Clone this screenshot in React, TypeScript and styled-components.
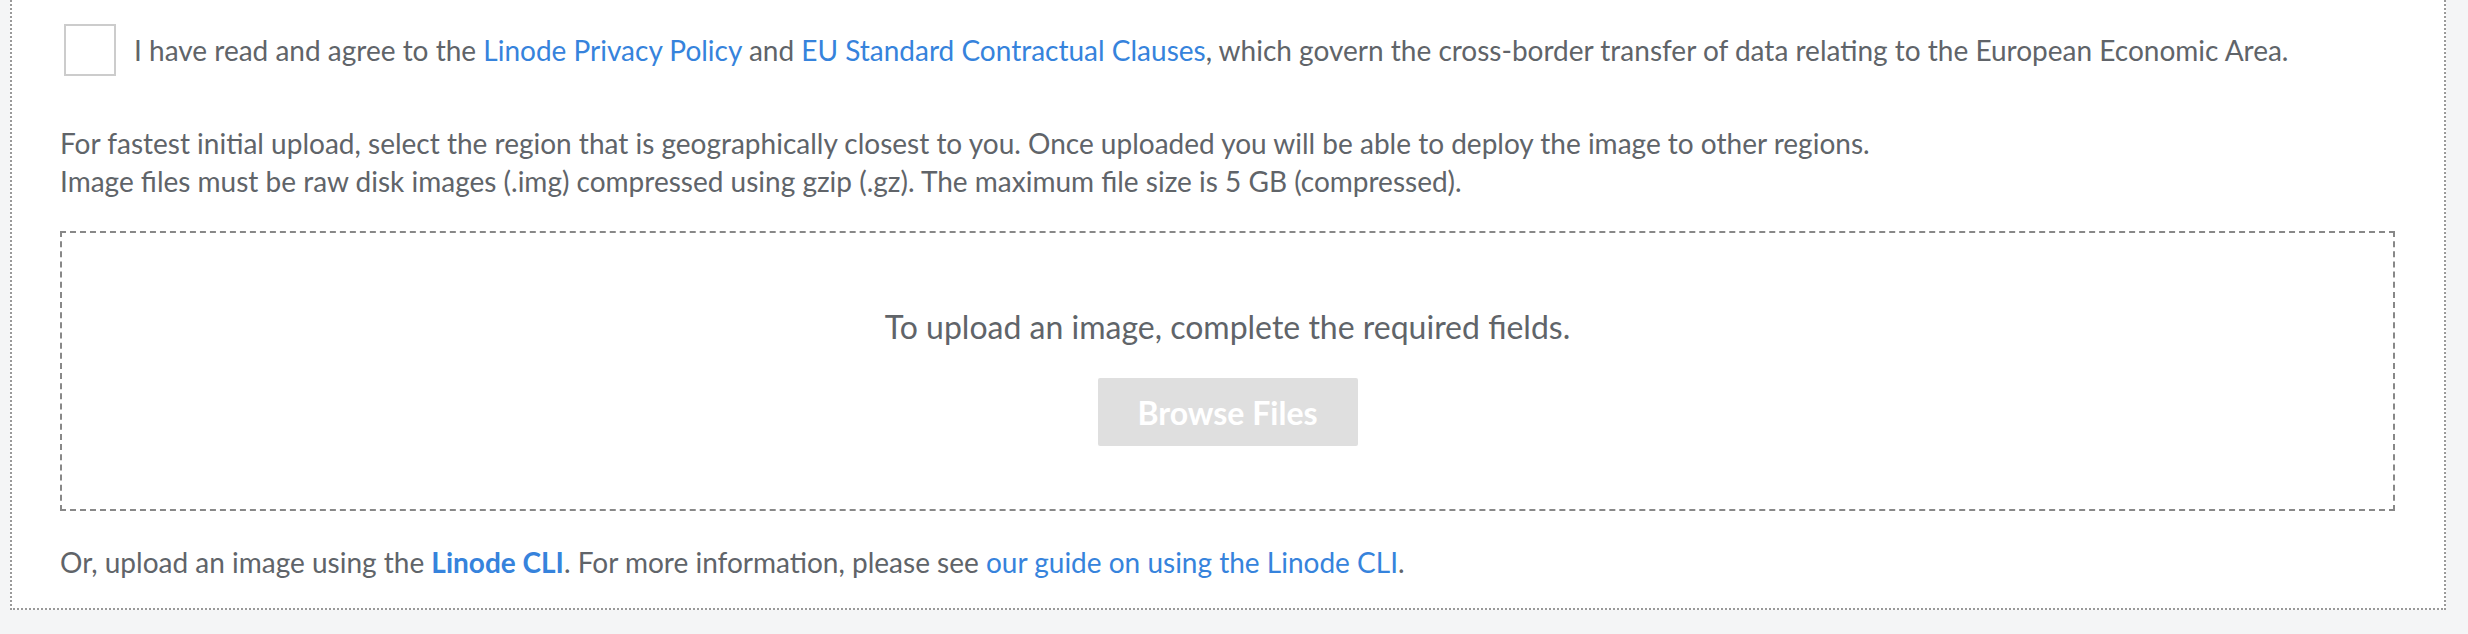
import React from "react";
import styled, { createGlobalStyle } from "styled-components";

const GlobalStyle = createGlobalStyle`
  html, body {
    margin: 0;
    padding: 0;
    background: #f4f5f6;
  }
  body {
    font-family: Lato, "Noto Sans", "Liberation Sans", sans-serif;
    color: #606469;
  }
  * { box-sizing: border-box; }
`;

const Page = styled.div`
  padding: 0 22px 0 10px;
  height: 634px;
`;

const Panel = styled.section`
  background: #ffffff;
  border: 2px dotted #9a9a9a;
  border-top: none;
  padding: 24px 49px 27px 48px;
`;

const AgreementRow = styled.label`
  display: flex;
  align-items: center;
  gap: 18px;
  font-size: 28px;
  line-height: 38px;
  padding-left: 4px;
`;

const CheckBox = styled.span`
  flex: none;
  width: 52px;
  height: 52px;
  border: 2px solid #cccccc;
  background: #ffffff;
`;

const Link = styled.a<{ $bold?: boolean }>`
  color: #3683dc;
  text-decoration: none;
  font-weight: ${(p) => (p.$bold ? 700 : 400)};
`;

const Helper = styled.p`
  margin: 48px 0 0 0;
  font-size: 28px;
  line-height: 38px;
`;

const DropZone = styled.div`
  margin-top: 31px;
  height: 280px;
  border: 2px dashed #888888;
  display: flex;
  flex-direction: column;
  align-items: center;
  padding-top: 74px;
  gap: 31px;
`;

const DropText = styled.div`
  font-size: 32px;
  line-height: 40px;
`;

const BrowseButton = styled.button`
  width: 260px;
  height: 68px;
  border: none;
  border-radius: 2px;
  background: #dfdfdf;
  color: #ffffff;
  font-family: Lato, "Noto Sans", sans-serif;
  font-weight: 700;
  font-size: 32px;
  cursor: default;
`;

const Footer = styled.p`
  margin: 32px 0 0 0;
  font-size: 28px;
  line-height: 38px;
`;

export default function App() {
  return (
    <>
      <GlobalStyle />
      <Page>
        <Panel>
          <AgreementRow>
            <CheckBox />
            <span>
              I have read and agree to the <Link href="#">Linode Privacy Policy</Link> and{" "}
              <Link href="#">EU Standard Contractual Clauses</Link>, which govern the cross-border
              transfer of data relating to the European Economic Area.
            </span>
          </AgreementRow>
          <Helper>
            For fastest initial upload, select the region that is geographically closest to you. Once
            uploaded you will be able to deploy the image to other regions.
            <br />
            Image files must be raw disk images (.img) compressed using gzip (.gz). The maximum file
            size is 5 GB (compressed).
          </Helper>
          <DropZone>
            <DropText>To upload an image, complete the required fields.</DropText>
            <BrowseButton disabled>Browse Files</BrowseButton>
          </DropZone>
          <Footer>
            Or, upload an image using the <Link href="#" $bold>Linode CLI</Link>. For more information,
            please see <Link href="#">our guide on using the Linode CLI</Link>.
          </Footer>
        </Panel>
      </Page>
    </>
  );
}
